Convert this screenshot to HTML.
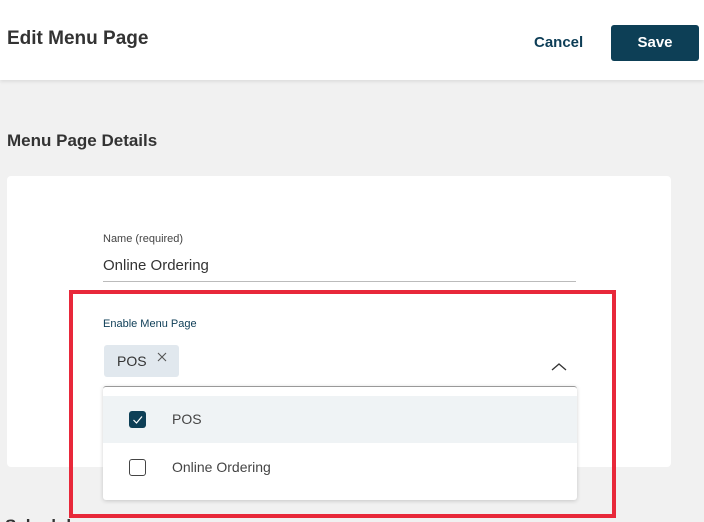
<!DOCTYPE html>
<html><head><style>
*{margin:0;padding:0;box-sizing:border-box}
html,body{width:704px;height:522px;overflow:hidden}
body{background:#f1f1f1;font-family:"Liberation Sans",sans-serif;position:relative;color:#333}
.hdr{position:absolute;left:0;top:0;width:704px;height:80px;background:#fff;box-shadow:0 2px 3px rgba(0,0,0,.08)}
.a{position:absolute}
</style></head><body>
<div class="hdr"></div>
<div class="a" style="left:7px;top:28px;font-size:19px;font-weight:bold;color:#333">Edit Menu Page</div>
<div class="a" style="left:534px;top:34px;font-size:15px;font-weight:bold;color:#0d3d56">Cancel</div>
<div class="a" style="left:611px;top:25px;width:88px;height:36px;background:#0d3f56;border-radius:3px;color:#fff;font-size:15px;font-weight:bold;text-align:center;line-height:35px">Save</div>
<div class="a" style="left:7px;top:131px;font-size:17px;font-weight:bold;color:#333">Menu Page Details</div>
<div class="a" style="left:7px;top:176px;width:664px;height:291px;background:#fff;border-radius:4px"></div>
<div class="a" style="left:103px;top:233px;font-size:11px;color:#444">Name (required)</div>
<div class="a" style="left:103px;top:257px;font-size:15px;color:#333">Online Ordering</div>
<div class="a" style="left:103px;top:281px;width:473px;height:1px;background:#bbb"></div>
<div class="a" style="left:5px;top:516px;font-size:17px;font-weight:bold;color:#333;height:6px;overflow:hidden;line-height:20px">Schedule</div>
<div class="a" style="left:69px;top:290px;width:547px;height:228px;border:4px solid #e8283a"></div>
<div class="a" style="left:103px;top:318px;font-size:11px;color:#0d3d56">Enable Menu Page</div>
<div class="a" style="left:104px;top:345px;width:75px;height:32px;background:#e1e8ee;border-radius:3px"></div>
<div class="a" style="left:117px;top:353px;font-size:14px;color:#333">POS</div>
<svg class="a" style="left:157px;top:352px" width="10" height="10"><path d="M1 1 L9 9 M9 1 L1 9" stroke="#555" stroke-width="1.1"/></svg>
<svg class="a" style="left:551px;top:362px" width="16" height="10"><path d="M1 8 L8 2 L15 8" stroke="#333" stroke-width="1.3" fill="none"/></svg>
<div class="a" style="left:103px;top:386px;width:474px;height:114px;background:#fff;border-radius:3px;box-shadow:0 1px 4px rgba(0,0,0,.18);border-top:1px solid #999"></div>
<div class="a" style="left:103px;top:396px;width:474px;height:47px;background:#eff3f5"></div>
<div class="a" style="left:129px;top:411px;width:17px;height:17px;background:#0d3f56;border-radius:3px"></div>
<svg class="a" style="left:129px;top:411px" width="17" height="17"><path d="M4.5 9 L7.5 12 L13 5.5" stroke="#fff" stroke-width="1.2" fill="none"/></svg>
<div class="a" style="left:172px;top:411px;font-size:14px;color:#444">POS</div>
<div class="a" style="left:129px;top:459px;width:17px;height:17px;border:1.5px solid #444;border-radius:3px"></div>
<div class="a" style="left:172px;top:459px;font-size:14px;color:#444">Online Ordering</div>
</body></html>
